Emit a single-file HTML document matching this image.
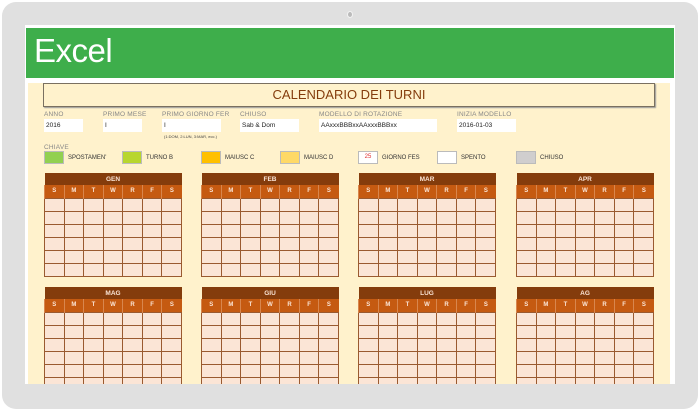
<!DOCTYPE html>
<html><head><meta charset="utf-8"><style>
*{margin:0;padding:0;box-sizing:border-box}
body{width:700px;height:412px;background:#fff;position:relative;overflow:hidden;font-family:"Liberation Sans",sans-serif}
.bez{position:absolute;left:2px;top:2px;width:696px;height:407px;background:#e0e0e0;border-radius:14px}
.cam{position:absolute;left:347px;top:11px;width:6px;height:7px;border-radius:50%;background:#bbb;border:1px solid #f2f2f2}
.scr{position:absolute;left:25px;top:25px;width:650px;height:359px;background:#fff;overflow:hidden}
.green{position:absolute;left:1px;top:3px;width:648px;height:50px;background:#3eae4b;color:#fff;font-size:33px;padding:4px 0 0 8px;letter-spacing:-0.5px}
.cream{position:absolute;left:3px;top:58px;width:642px;height:301px;background:#fff2cc}
.a{position:absolute}
.title{left:15px;top:0px;width:612px;height:24px;border:1px solid #7a7060;box-shadow:1px 1px 1px #999;color:#843c0c;font-size:13px;text-align:center;line-height:22px}
.lbl{font-size:6.5px;color:#888;letter-spacing:.2px}
.box{background:#fff;height:13px;font-size:6.5px;color:#222;padding:3px 0 0 2px}
.sw{width:20px;height:13px;border:1px solid #bbb}
.sl{font-size:6px;color:#333}
table{position:absolute;border-collapse:collapse;width:138px;table-layout:fixed}
th.m{background:#843c0c;color:#fbe5d6;height:12px;font-size:6.5px;font-weight:bold}
th.d{background:#c55a11;color:#fbe5d6;height:13px;font-size:6px;font-weight:bold;border-left:1px solid #d8864e}
td{background:#fbe5d6;height:13px;border:1px solid #9a5a30}
</style></head><body>
<div class="bez"></div><div class="cam"></div>
<div class="scr">
<div class="green">Excel</div>
<div class="cream">
<div class="a title">CALENDARIO DEI TURNI</div>
<div class="a lbl" style="left:16px;top:28px">ANNO</div>
<div class="a lbl" style="left:75px;top:28px">PRIMO MESE</div>
<div class="a lbl" style="left:134px;top:28px">PRIMO GIORNO FER</div>
<div class="a lbl" style="left:212px;top:28px">CHIUSO</div>
<div class="a lbl" style="left:291px;top:28px">MODELLO DI ROTAZIONE</div>
<div class="a lbl" style="left:429px;top:28px">INIZIA MODELLO</div>
<div class="a box" style="left:16px;top:36px;width:39px">2016</div>
<div class="a box" style="left:75px;top:36px;width:39px">I</div>
<div class="a box" style="left:134px;top:36px;width:59px">I</div>
<div class="a box" style="left:212px;top:36px;width:59px">Sab &amp; Dom</div>
<div class="a box" style="left:291px;top:36px;width:118px">AAxxxBBBxxAAxxxBBBxx</div>
<div class="a box" style="left:429px;top:36px;width:59px">2016-01-03</div>
<div class="a" style="left:136px;top:51px;font-size:4px;color:#444">(1:DOM, 2:LUN, 3:MAR, ecc.)</div>
<div class="a lbl" style="left:16px;top:61px">CHIAVE</div>
<div class="a sw" style="left:16px;top:68px;background:#92d050"></div><div class="a sl" style="left:40px;top:72px">SPOSTAMEN'</div>
<div class="a sw" style="left:94px;top:68px;background:#b8d62e"></div><div class="a sl" style="left:118px;top:72px">TURNO B</div>
<div class="a sw" style="left:173px;top:68px;background:#ffc000"></div><div class="a sl" style="left:197px;top:72px">MAIUSC C</div>
<div class="a sw" style="left:252px;top:68px;background:#ffd966"></div><div class="a sl" style="left:276px;top:72px">MAIUSC D</div>
<div class="a sw" style="left:330px;top:68px;background:#fff;font-size:6px;color:#e03030;text-align:center;line-height:11px">25</div><div class="a sl" style="left:354px;top:72px">GIORNO FES</div>
<div class="a sw" style="left:409px;top:68px;background:#fff"></div><div class="a sl" style="left:433px;top:72px">SPENTO</div>
<div class="a sw" style="left:488px;top:68px;background:#d0cece"></div><div class="a sl" style="left:512px;top:72px">CHIUSO</div>

<table style="left:16px;top:90px"><tr><th class="m" colspan="7">GEN</th></tr><tr><th class="d">S</th><th class="d">M</th><th class="d">T</th><th class="d">W</th><th class="d">R</th><th class="d">F</th><th class="d">S</th></tr><tr><td></td><td></td><td></td><td></td><td></td><td></td><td></td></tr><tr><td></td><td></td><td></td><td></td><td></td><td></td><td></td></tr><tr><td></td><td></td><td></td><td></td><td></td><td></td><td></td></tr><tr><td></td><td></td><td></td><td></td><td></td><td></td><td></td></tr><tr><td></td><td></td><td></td><td></td><td></td><td></td><td></td></tr><tr><td></td><td></td><td></td><td></td><td></td><td></td><td></td></tr></table>
<table style="left:173px;top:90px"><tr><th class="m" colspan="7">FEB</th></tr><tr><th class="d">S</th><th class="d">M</th><th class="d">T</th><th class="d">W</th><th class="d">R</th><th class="d">F</th><th class="d">S</th></tr><tr><td></td><td></td><td></td><td></td><td></td><td></td><td></td></tr><tr><td></td><td></td><td></td><td></td><td></td><td></td><td></td></tr><tr><td></td><td></td><td></td><td></td><td></td><td></td><td></td></tr><tr><td></td><td></td><td></td><td></td><td></td><td></td><td></td></tr><tr><td></td><td></td><td></td><td></td><td></td><td></td><td></td></tr><tr><td></td><td></td><td></td><td></td><td></td><td></td><td></td></tr></table>
<table style="left:330px;top:90px"><tr><th class="m" colspan="7">MAR</th></tr><tr><th class="d">S</th><th class="d">M</th><th class="d">T</th><th class="d">W</th><th class="d">R</th><th class="d">F</th><th class="d">S</th></tr><tr><td></td><td></td><td></td><td></td><td></td><td></td><td></td></tr><tr><td></td><td></td><td></td><td></td><td></td><td></td><td></td></tr><tr><td></td><td></td><td></td><td></td><td></td><td></td><td></td></tr><tr><td></td><td></td><td></td><td></td><td></td><td></td><td></td></tr><tr><td></td><td></td><td></td><td></td><td></td><td></td><td></td></tr><tr><td></td><td></td><td></td><td></td><td></td><td></td><td></td></tr></table>
<table style="left:488px;top:90px"><tr><th class="m" colspan="7">APR</th></tr><tr><th class="d">S</th><th class="d">M</th><th class="d">T</th><th class="d">W</th><th class="d">R</th><th class="d">F</th><th class="d">S</th></tr><tr><td></td><td></td><td></td><td></td><td></td><td></td><td></td></tr><tr><td></td><td></td><td></td><td></td><td></td><td></td><td></td></tr><tr><td></td><td></td><td></td><td></td><td></td><td></td><td></td></tr><tr><td></td><td></td><td></td><td></td><td></td><td></td><td></td></tr><tr><td></td><td></td><td></td><td></td><td></td><td></td><td></td></tr><tr><td></td><td></td><td></td><td></td><td></td><td></td><td></td></tr></table>

<table style="left:16px;top:204px"><tr><th class="m" colspan="7">MAG</th></tr><tr><th class="d">S</th><th class="d">M</th><th class="d">T</th><th class="d">W</th><th class="d">R</th><th class="d">F</th><th class="d">S</th></tr><tr><td></td><td></td><td></td><td></td><td></td><td></td><td></td></tr><tr><td></td><td></td><td></td><td></td><td></td><td></td><td></td></tr><tr><td></td><td></td><td></td><td></td><td></td><td></td><td></td></tr><tr><td></td><td></td><td></td><td></td><td></td><td></td><td></td></tr><tr><td></td><td></td><td></td><td></td><td></td><td></td><td></td></tr><tr><td></td><td></td><td></td><td></td><td></td><td></td><td></td></tr></table>
<table style="left:173px;top:204px"><tr><th class="m" colspan="7">GIU</th></tr><tr><th class="d">S</th><th class="d">M</th><th class="d">T</th><th class="d">W</th><th class="d">R</th><th class="d">F</th><th class="d">S</th></tr><tr><td></td><td></td><td></td><td></td><td></td><td></td><td></td></tr><tr><td></td><td></td><td></td><td></td><td></td><td></td><td></td></tr><tr><td></td><td></td><td></td><td></td><td></td><td></td><td></td></tr><tr><td></td><td></td><td></td><td></td><td></td><td></td><td></td></tr><tr><td></td><td></td><td></td><td></td><td></td><td></td><td></td></tr><tr><td></td><td></td><td></td><td></td><td></td><td></td><td></td></tr></table>
<table style="left:330px;top:204px"><tr><th class="m" colspan="7">LUG</th></tr><tr><th class="d">S</th><th class="d">M</th><th class="d">T</th><th class="d">W</th><th class="d">R</th><th class="d">F</th><th class="d">S</th></tr><tr><td></td><td></td><td></td><td></td><td></td><td></td><td></td></tr><tr><td></td><td></td><td></td><td></td><td></td><td></td><td></td></tr><tr><td></td><td></td><td></td><td></td><td></td><td></td><td></td></tr><tr><td></td><td></td><td></td><td></td><td></td><td></td><td></td></tr><tr><td></td><td></td><td></td><td></td><td></td><td></td><td></td></tr><tr><td></td><td></td><td></td><td></td><td></td><td></td><td></td></tr></table>
<table style="left:488px;top:204px"><tr><th class="m" colspan="7">AG</th></tr><tr><th class="d">S</th><th class="d">M</th><th class="d">T</th><th class="d">W</th><th class="d">R</th><th class="d">F</th><th class="d">S</th></tr><tr><td></td><td></td><td></td><td></td><td></td><td></td><td></td></tr><tr><td></td><td></td><td></td><td></td><td></td><td></td><td></td></tr><tr><td></td><td></td><td></td><td></td><td></td><td></td><td></td></tr><tr><td></td><td></td><td></td><td></td><td></td><td></td><td></td></tr><tr><td></td><td></td><td></td><td></td><td></td><td></td><td></td></tr><tr><td></td><td></td><td></td><td></td><td></td><td></td><td></td></tr></table>
</div>
</div>
</body></html>
